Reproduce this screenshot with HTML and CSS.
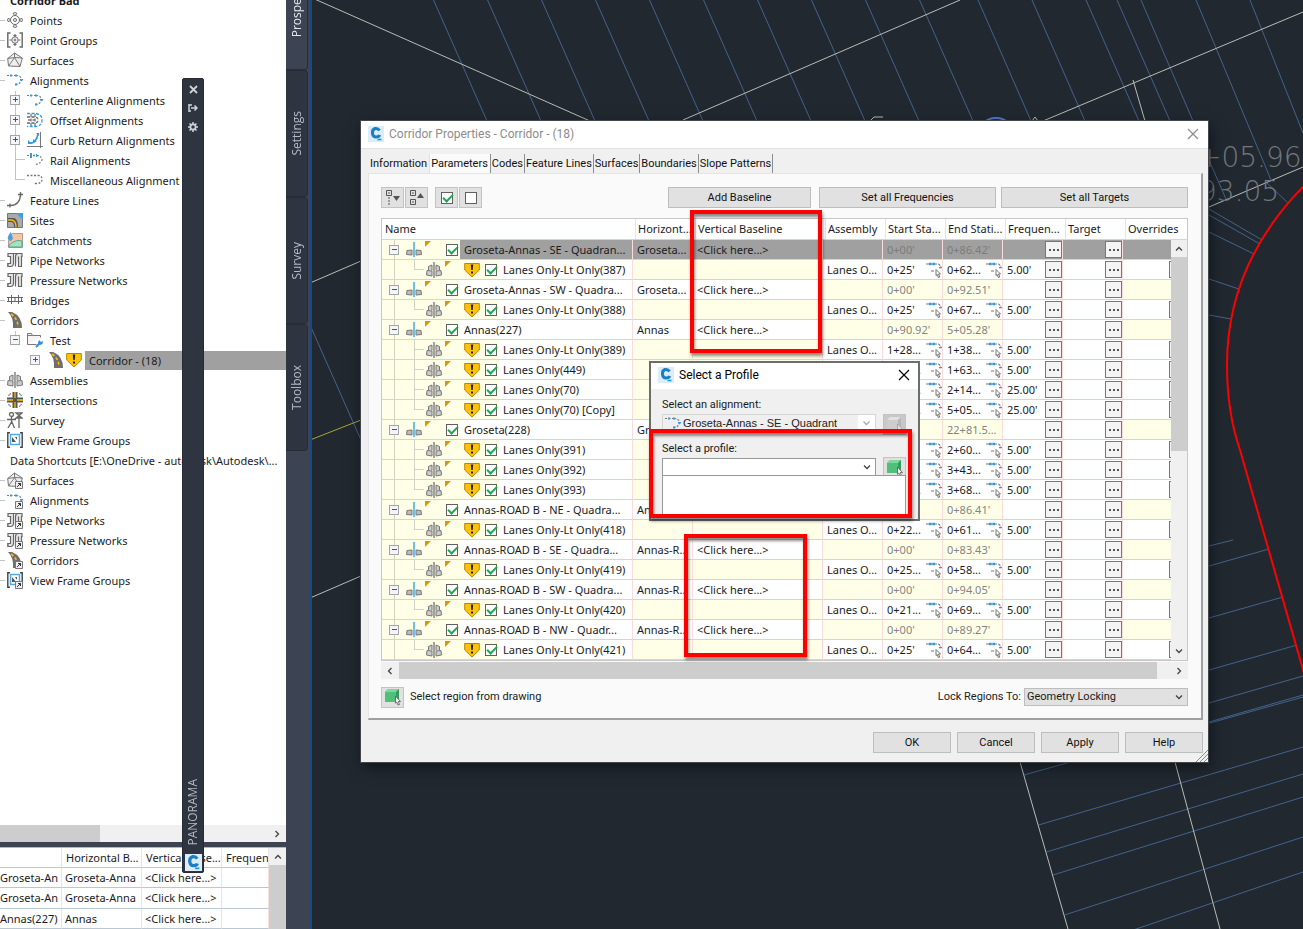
FILE: index.html
```html
<!DOCTYPE html>
<html lang="en">
<head>
<meta charset="utf-8">
<title>Corridor Properties</title>
<link rel="stylesheet" href="styles.css">
</head>
<body>
<svg class="defs" aria-hidden="true">
  <defs>
    <symbol id="i-points" viewBox="0 0 16 16"><g fill="none" stroke="#666"><circle cx="8" cy="8" r="4.500"/><circle cx="8" cy="8" r="1.500"/><path d="M8 3.500L6 1.500 8 .5 10 1.500zM8 12.500l-2 2 2 1 2-1zM3.500 8l-2-2-1 2 1 2zM12.500 8l2-2 1 2-1 2z"/></g></symbol>
    <symbol id="i-pgroups" viewBox="0 0 16 16"><g fill="none" stroke="#666"><path d="M3.500 1H.8v14h2.700M12.500 1h2.700v14h-2.700" stroke-width="1.400"/><circle cx="8" cy="8" r="3.200"/><circle cx="8" cy="8" r="1"/><path d="M8 2v3M8 11v3M2.500 8h2M11.500 8h2M6.500 3.500h3M6.500 12.500h3"/></g></symbol>
    <symbol id="i-surface" viewBox="0 0 16 16"><path d="M7.500 1L.7 6.500 1.500 14l11.500.5L15.300 6zM.7 6.500L7.500 5.500 15.300 6M7.500 1v4.500L1.500 14M7.500 5.500L13 14.500" fill="#eee" stroke="#777"/></symbol>
    <symbol id="i-align" viewBox="0 0 16 16"><path d="M0 3.500h9M9 3.500q5 0 5.500 4q-.5 5-7 5" fill="none" stroke="#777" stroke-width="1.200" stroke-dasharray="2 1.500"/><path d="M3 2.500h2v2H3zM8 2.500h2v2H8zM13 7h3v1.500h-3zM8 11.500h2v2H8z" fill="#2d9be8"/></symbol>
    <symbol id="i-offset" viewBox="0 0 16 16"><g fill="none" stroke-width="1.300" stroke-dasharray="3 1.500"><path d="M0 1.500h9q6 1 6 6.500t-6 6.500H0" stroke="#2d9be8"/><path d="M0 5h8q3 0 3 3t-3 3H0" stroke="#666"/><path d="M1 8h8M4 2v12M8 2v12" stroke="#777"/></g></symbol>
    <symbol id="i-curb" viewBox="0 0 16 16"><path d="M0 14.500h16M13.500 0v16" stroke="#777" fill="none"/><path d="M2 11q7 1 9-9" stroke="#2d9be8" fill="none" stroke-width="1.600"/><path d="M1 8l4 4H1zM9 1h3v3zM6 7l4 3H6z" fill="#2d9be8"/></symbol>
    <symbol id="i-rail" viewBox="0 0 16 16"><path d="M6 3.500h4q5 1 5 4t-6 5" fill="none" stroke="#777" stroke-width="1.300" stroke-dasharray="2 1.500"/><path d="M0 3.500h2" stroke="#777"/><path d="M3 1h2v5H3zM9 2h1v3H9z" fill="#2d9be8"/></symbol>
    <symbol id="i-misc" viewBox="0 0 16 16"><path d="M0 3.500h11q4 0 4 4t-6 4H7" fill="none" stroke="#777" stroke-width="1.300" stroke-dasharray="2 1.500"/></symbol>
    <symbol id="i-feature" viewBox="0 0 16 16"><path d="M3 13.500q10 0 10.500-11M0 13.500h5M3 11.500v4M11 2.500h5M13.500 0v5" fill="none" stroke="#666" stroke-width="1.300"/></symbol>
    <symbol id="i-sites" viewBox="0 0 16 16"><path d="M.5 1.500h15v14H.5z" fill="#aaa" stroke="#777"/><path d="M9 1h7v7z" fill="#3f9fe0"/><path d="M1 6h5q5 0 5 9H7q0-5-3-5H1z" fill="#555"/><path d="M1 8h4q4 1 4 7" stroke="#fb0" fill="none" stroke-width="1.400"/></symbol>
    <symbol id="i-catch" viewBox="0 0 16 16"><path d="M5 1.500h10.500v14H1.500V9z" fill="#f6c6a4" stroke="#b98"/><path d="M2 13q7-6 13-4v6H2z" fill="#a5e3bc" stroke="#4a9"/><path d="M3.500 0Q-2 8 3.500 9 8 8 3.500 0z" fill="#4a9fd8"/></symbol>
    <symbol id="i-pipe" viewBox="0 0 16 16"><path d="M1 1.500h5.500v9.500q0 3.500-3 3.500H1v-3h2.500v-7H1zM8.500 14.500v-10q0-3 3-3H15v3h-.5v10h-3v-10" fill="#e6e6e6" stroke="#666" stroke-width="1.200"/><path d="M6.500 1.500h4M0 11v4" stroke="#666" stroke-width="1.200"/></symbol>
    <symbol id="i-bridge" viewBox="0 0 16 16"><path d="M0 5.500h16M0 9.500h16M4.500 3v9M11.500 3v9M8 5v5M1.500 5v5M14.500 5v5" fill="none" stroke="#666"/></symbol>
    <symbol id="i-road" viewBox="0 0 16 16"><path d="M1 0h4q10 4 10 16H6Q7 6 1 0z" fill="#6e6e6e"/><path d="M4 2q7 5 7 13" stroke="#fb1" stroke-width="1.600" fill="none" stroke-dasharray="3 2"/></symbol>
    <symbol id="i-folder" viewBox="0 0 16 16"><path d="M.5 12.500v-11h4l1 2h8v2M.5 12.500h9M.5 3.500h5" fill="#f4f4f4" stroke="#777"/><path d="M9 15l4-4" stroke="#2d8fe0" stroke-width="2"/><path d="M12 8l2 2 2-1-.5 3-2.500 1-2-2z" fill="#2d8fe0"/></symbol>
    <symbol id="i-warn" viewBox="0 0 16 16"><path d="M.7 1.500h14.600V8L8 15 .7 8z" fill="#ffc20a" stroke="#b98500"/><path d="M6.800 2.500h2.400L8.700 8H7.300zM7 9.500h2v2H7z" fill="#222"/></symbol>
    <symbol id="i-assembly" viewBox="0 0 16 16"><path d="M1 8.500l5 .5v5l-5.500-1zM15 8.500l-5 .5v5l5.500-1zM2.500 8V4.500L6 3v5.500M13.500 8V4.500L10 3v5.500" fill="#ccc" stroke="#777"/><path d="M8 0v16" stroke="#666" stroke-width="1.200"/></symbol>
    <symbol id="i-inter" viewBox="0 0 16 16"><path d="M5.500 0h5v5.500H16v5h-5.500V16h-5v-5.500H0v-5h5.500z" fill="#555"/><path d="M8 0v6M8 10v6M0 8h6M10 8h6" stroke="#fb1" stroke-width="1.300"/><path d="M1 3.500q2.500 0 2.500-2.500M15 3.500q-2.500 0-2.500-2.500M1 12.500q2.500 0 2.500 2.500M15 12.500q-2.500 0-2.500 2.500" fill="none" stroke="#777"/></symbol>
    <symbol id="i-survey" viewBox="0 0 16 16"><g fill="none" stroke="#666" stroke-width="1.300"><circle cx="4.500" cy="2.500" r="2"/><path d="M4.500 5v5L1 16M4.500 9l3 7M0 7.500h9M12 5v11M9 1h6l-3 2.500L15 6H9l3-2.500z"/></g></symbol>
    <symbol id="i-frame" viewBox="0 0 16 16"><path d="M3 .8H.8v14.400H3M13 .8h2.200v14.400H13" fill="none" stroke="#444" stroke-width="1.400"/><path d="M3.500 2.500h9v10h-9z" fill="#fff" stroke="#55a9e8" stroke-width="1.500"/><path d="M5 5v5h4zM8 5h2v3z" fill="#555"/></symbol>
    <symbol id="i-link" viewBox="0 0 8 8"><path d="M.5.5h7v7h-7z" fill="#eee" stroke="#777"/><path d="M2 6l3.500-3.500M3 2.500h2.500V5" fill="none" stroke="#333"/></symbol>
    <symbol id="i-baseline" viewBox="0 0 16 16"><path d="M1 8.500l5-.5v5l-5.500-.5zM15 8.500L10 8v5l5.500-.5z" fill="#bbb" stroke="#777"/><path d="M8 0v15" stroke="#6cbdf0" stroke-width="2"/></symbol>
    <symbol id="i-flag" viewBox="0 0 6 6"><path d="M0 0h6L0 6z" fill="#e09500"/></symbol>
    <symbol id="i-pick" viewBox="0 0 16 16"><path d="M0 2h12q2 0 3 4M5 9h4" fill="none" stroke="#777" stroke-width="1.200" stroke-dasharray="3 1"/><path d="M3 .8h2.500v2.400H3zM6.500.8H9v2.400H6.500zM13 5h3v1.300h-3z" fill="#2d9be8"/><path d="M10 7.500l4.500 4.500h-2l1.300 3-1.500.5-1-3L10 13.500z" fill="#fff" stroke="#666" stroke-width=".9"/></symbol>
    <symbol id="i-cube" viewBox="0 0 18 18"><path d="M1 4l3-3h11v10l-3 3H1z" fill="#4fbf79"/><path d="M1 4l3-3h11l-3 3z" fill="#7fd79d"/><path d="M12 4l3-3v10l-3 3z" fill="#2f9d5b"/><path d="M11.500 8l5 5.500h-2.300l1.300 3-1.500.5-1.200-3-1.300 1.200z" fill="#fff" stroke="#555" stroke-width=".8"/></symbol>
    <symbol id="i-logo" viewBox="0 0 16 16"><path d="M0 0h16v16H0z" fill="#dcecf8"/><path d="M11.500 4.500Q10 2 7 2.500 4 3.500 4.500 7.500 5 11 8 11q3 0 3.700-2" fill="none" stroke="#1b7fc0" stroke-width="3"/><path d="M9.500 13.500h4" stroke="#1b9ad0" stroke-width="1.600"/></symbol>
    <symbol id="i-x" viewBox="0 0 12 12"><path d="M1 1l10 10M11 1L1 11" fill="none" stroke="currentColor" stroke-width="1.200"/></symbol>
    <symbol id="i-down" viewBox="0 0 10 10"><path d="M2 3.500L5 6.500 8 3.500" fill="none" stroke="currentColor" stroke-width="1.300"/></symbol>
  </defs>
</svg>

<main class="app">
  <svg class="drawing" aria-hidden="true">
    <g id="hatch" class="hatch"></g>
    <g class="edge">
      <path d="M310 283L361 261M683 120L960 0M1043 121L1303 12M1209 207L1303 167M310 598L361 576M310 -3L590 121M1133 80L1145 121M1020 762L1068 929M1175 762L1220 929M1032 121l3-4 3 4M870 121l4-4h9"/>
    </g>
    <path class="yellow" d="M310 440L361 420"/>
    <circle class="node" cx="996" cy="137" r="19"/>
    <path class="red" d="M1310 180Q1227 260 1227 365Q1227 412 1240 450Q1266 540 1306 680"/>
    <g class="station"><text x="1198" y="167">+05.96</text><text x="1199" y="201">93.05</text></g>
  </svg>

  <section class="palette" aria-label="Toolspace">
    <ul id="tree" class="tree"></ul>
    <div class="hscroll"><span class="hthumb"></span><svg class="chev right"><use href="#i-down"/></svg></div>
    <div class="mini">
      <table class="minitable">
        <thead><tr><th></th><th>Horizontal B...</th><th>Vertical Base...</th><th>Frequen</th></tr></thead>
        <tbody>
          <tr><td>Groseta-An</td><td>Groseta-Anna</td><td>&lt;Click here...&gt;</td><td></td></tr>
          <tr><td>Groseta-An</td><td>Groseta-Anna</td><td>&lt;Click here...&gt;</td><td></td></tr>
          <tr><td>Annas(227)</td><td>Annas</td><td>&lt;Click here...&gt;</td><td></td></tr>
        </tbody>
      </table>
      <div class="minibar"><svg class="chev up"><use href="#i-down"/></svg><span class="minithumb"></span></div>
    </div>
  </section>

  <nav class="sidetabs" aria-label="Toolspace tabs">
    <button class="sidetab on"><span>Prospector</span></button>
    <button class="sidetab"><span>Settings</span></button>
    <button class="sidetab"><span>Survey</span></button>
    <button class="sidetab"><span>Toolbox</span></button>
  </nav>

  <aside class="panorama" aria-label="Panorama">
    <button aria-label="Close"><svg width="9" height="9" viewBox="0 0 9 9"><path d="M1 1l7 7M8 1L1 8" stroke="currentColor" stroke-width="1.800"/></svg></button>
    <button aria-label="Auto-hide"><svg width="10" height="10" viewBox="0 0 10 10"><path d="M1 1v8M1 2h3M1 8h2M3 5h6M6.500 2.500L9 5 6.500 7.500" fill="none" stroke="currentColor" stroke-width="1.500"/></svg></button>
    <button aria-label="Properties"><svg width="10" height="10" viewBox="0 0 10 10"><circle cx="5" cy="5" r="2.600" fill="none" stroke="currentColor" stroke-width="1.700"/><path d="M5 0v2M5 8v2M0 5h2M8 5h2M1.500 1.500l1.300 1.300M7.200 7.200l1.300 1.300M8.500 1.500L7.200 2.800M2.800 7.200L1.500 8.500" stroke="currentColor" stroke-width="1.500"/></svg></button>
    <span class="panotitle">PANORAMA</span>
    <svg class="panologo" width="17" height="17"><use href="#i-logo"/></svg>
  </aside>

  <section class="dialog" role="dialog" aria-labelledby="dlg-title">
    <header class="titlebar">
      <svg width="16" height="16"><use href="#i-logo"/></svg>
      <h1 id="dlg-title">Corridor Properties - Corridor - (18)</h1>
      <button class="close" aria-label="Close"><svg width="12" height="12"><use href="#i-x"/></svg></button>
    </header>
    <nav class="tabs">
      <button>Information</button><button class="on">Parameters</button><button>Codes</button><button>Feature Lines</button><button>Surfaces</button><button>Boundaries</button><button>Slope Patterns</button>
    </nav>
    <div class="panel">
      <div class="toolbar">
        <button class="tool" aria-label="Expand all"><svg width="18" height="18" viewBox="0 0 18 18"><path d="M2.500 1.500h5v5h-5zM4 4h2" fill="none" stroke="#555"/><path d="M5 8v8" stroke="#555" stroke-dasharray="2 1"/><path d="M9 7h7l-3.500 5z" fill="#555"/></svg></button>
        <button class="tool" aria-label="Collapse all"><svg width="18" height="18" viewBox="0 0 18 18"><path d="M2.500 1.500h5v5h-5zM2.500 10.500h5v5h-5zM4 4h2M4 13h2" fill="none" stroke="#555"/><path d="M9 9h7l-3.500-5z" fill="#555"/></svg></button>
        <button class="tool gap" aria-label="Select all"><span class="box ticked"></span></button>
        <button class="tool" aria-label="Select none"><span class="box"></span></button>
        <span class="grow"></span>
        <button class="btn add">Add Baseline</button>
        <button class="btn freq">Set all Frequencies</button>
        <button class="btn targ">Set all Targets</button>
      </div>
      <div class="gridbox">
        <table class="grid">
          <colgroup><col class="c-name"><col class="c-n"><col class="c-vert"><col class="c-n"><col class="c-n"><col class="c-n"><col class="c-n"><col class="c-n"><col></colgroup>
          <thead><tr><th>Name</th><th>Horizont...</th><th>Vertical Baseline</th><th>Assembly</th><th>Start Sta...</th><th>End Stati...</th><th>Frequen...</th><th>Target</th><th>Overrides</th></tr></thead>
          <tbody id="rows"></tbody>
        </table>
        <div class="vbar"><svg class="chev up"><use href="#i-down"/></svg><span class="vthumb"></span><svg class="chev"><use href="#i-down"/></svg></div>
      </div>
      <div class="hbar"><svg class="chev left"><use href="#i-down"/></svg><span class="hbarthumb"></span><svg class="chev right"><use href="#i-down"/></svg></div>
      <div class="under">
        <button class="tool pick" id="pickregion" aria-labelledby="picklabel"><svg width="18" height="18"><use href="#i-cube"/></svg></button>
        <span id="picklabel">Select region from drawing</span>
        <label class="lock" for="lock">Lock Regions To:</label>
        <div class="combo gray"><select id="lock"><option>Geometry Locking</option></select><svg class="chev"><use href="#i-down"/></svg></div>
      </div>
    </div>
    <footer class="actions">
      <button class="btn">OK</button><button class="btn">Cancel</button><button class="btn">Apply</button><button class="btn">Help</button>
    </footer>
    <svg class="grip" width="14" height="14" viewBox="0 0 14 14"><path d="M2 14L14 2M6 14l8-8M10 14l4-4" stroke="#8a8a8a"/></svg>
  </section>

  <section class="profile" role="dialog" aria-labelledby="prof-title">
    <header class="titlebar">
      <svg width="16" height="16"><use href="#i-logo"/></svg>
      <h2 id="prof-title">Select a Profile</h2>
      <button class="close" aria-label="Close"><svg width="12" height="12"><use href="#i-x"/></svg></button>
    </header>
    <div class="profbody">
      <label for="alignment">Select an alignment:</label>
      <div class="pickrow">
        <div class="combo off"><svg width="16" height="16"><use href="#i-align"/></svg><select id="alignment" disabled><option>Groseta-Annas - SE - Quadrant</option></select><svg class="chev"><use href="#i-down"/></svg></div>
        <button class="tool off" aria-label="Pick alignment" disabled><svg width="18" height="18"><use href="#i-cube"/></svg></button>
      </div>
      <label for="profilesel">Select a profile:</label>
      <div class="pickrow second">
        <div class="combo open"><select id="profilesel"><option></option></select><svg class="chev"><use href="#i-down"/></svg></div>
        <button class="tool" aria-label="Pick profile"><svg width="18" height="18"><use href="#i-cube"/></svg></button>
      </div>
      <div class="droplist"></div>
    </div>
  </section>

  <div class="mark mark-a"></div>
  <div class="mark mark-b"></div>
  <div class="mark mark-c"></div>
</main>
<script src="app.js"></script>
</body>
</html>
```

FILE: styles.css
```css
* { box-sizing: border-box; }
body { margin: 0; background: #212830; color: #1b1b1b; font: 12px/20px "Open Sans", "Noto Sans", sans-serif; }
button, select, input { font: inherit; color: inherit; margin: 0; padding: 0; }
button { border: 0; background: none; }
h1, h2 { margin: 0; font-size: 12px; font-weight: 400; }
svg { display: block; flex: none; }
.defs { position: absolute; width: 0; height: 0; }
.grow { flex: 1; }

.app { position: relative; display: flex; height: 100vh; overflow: hidden; }
.drawing { position: absolute; inset: 0; width: 100%; height: 100%; }
.hatch { stroke: #43648c; fill: none; }
.edge { stroke: #b9bdb5; fill: none; }
.yellow { stroke: #a9a53a; fill: none; }
.node { stroke: #5575c9; fill: none; stroke-width: 2; }
.red { stroke: #f00; fill: none; stroke-width: 2; }
.station { fill: #73787e; font: 200 28px "DejaVu Sans Light", "DejaVu Sans", sans-serif; }

/* Toolspace */
.palette { position: relative; display: flex; flex-direction: column; width: 286px; background: #3c4453; font: 11px/20px "Noto Sans", "Open Sans", sans-serif; }
.tree { flex: 1; margin: 0; padding: 0; list-style: none; overflow: hidden; background: #fff; min-height: 0; }
.tree li { display: flex; align-items: center; height: 20px; white-space: nowrap; padding-left: 7px; }
.tree li:first-child { margin-top: -9px; padding-left: 10px; font-weight: 700; }
.tree .ico { position: relative; width: 16px; height: 16px; margin: -3px 7px 0 0; }
.tree .ico svg { width: 16px; height: 16px; }
.tree .ico .ln { position: absolute; right: 0; bottom: -1px; width: 8px; height: 8px; }
.tree .d1 { background: linear-gradient(#c4c4c4, #c4c4c4) 15px 0/1px 100% no-repeat; padding-left: 10px; }
.tree .d1.end { background-size: 1px 9px; }
.tree .d0::before { content: ""; width: 5px; margin: -2px 0 0 -7px; border-top: 1px solid #c4c4c4; }
.tree .d0 .ico { margin-left: 2px; }
.tree .dash { width: 10px; margin: -3px 0 0 5px; border-top: 1px solid #c4c4c4; }
.tree .d1 .ico { margin-left: 2px; }
.tree .d1 .expander ~ .ico { margin-left: 7px; }
.tree .d2 { padding-left: 30px; }
.tree .d2 .ico { margin: -3px 2px 0 0; }
.tree .d2 .expander { margin-right: 8px; }
.tree .sel { flex: 1; height: 19px; margin: -2px 0 0 1px; padding-left: 4px; background: #a0a0a0; line-height: 20px; }
.tree .cut { padding-left: 10px; }
.expander { width: 10px; height: 10px; border: 1px solid #a4a4a4; background: #f4f5fa; position: relative; flex: none; margin-top: -3px; }
.expander::before, .expander.plus::after { content: ""; position: absolute; left: 2px; right: 1px; top: 3px; height: 1px; background: #3a55a0; }
.expander.plus::after { left: 4px; right: auto; top: 1px; width: 1px; height: 5px; }
.chev { width: 10px; height: 10px; color: #444; }
.chev.up { transform: rotate(180deg); }
.chev.left { transform: rotate(90deg); }
.chev.right { transform: rotate(-90deg); }
.hscroll { display: flex; align-items: center; justify-content: space-between; height: 17px; background: #f0f0f0; padding-right: 4px; }
.hthumb { width: 100px; height: 17px; background: #cdcdcd; }
.mini { display: flex; margin-top: 5px; background: #fff; overflow: hidden; height: 82px; border-top: 1px solid #b4b8be; }
.minitable { flex: 1; width: 269px; table-layout: fixed; border-collapse: separate; border-spacing: 0; }
.minitable th, .minitable td { height: 20px; padding: 0 4px 0 3px; overflow: hidden; white-space: nowrap; text-align: left; font-weight: 400; line-height: 19px; border-bottom: 1px solid #b9c7d3; border-right: 1px solid #f6dede; }
.minitable th { padding-left: 4px; border-right-color: #e5e5e5; }
.minitable th:nth-child(1) { width: 62px; }
.minitable th:nth-child(2), .minitable th:nth-child(3) { width: 80px; padding-right: 0; }
.minitable th:nth-child(4) { padding-right: 0; }
.minitable td:first-child { padding: 0; }
.minibar { width: 17px; background: #f0f0f0; display: flex; flex-direction: column; align-items: center; padding-top: 4px; }
.minithumb { flex: 1; width: 17px; margin-top: 3px; background: #cdcdcd; }

.sidetabs { position: relative; width: 26px; background: #3c4453; border-right: 2px solid #174a82; padding-right: 2px; }
.sidetab { display: flex; align-items: center; justify-content: center; width: 22px; height: 127px; border: 1px solid #272d38; border-left: 0; border-radius: 0 4px 4px 0; background: #2e3440; color: #b6bac1; font-size: 12px; }
.sidetab:first-child { margin-top: -57px; }
.sidetab.on { background: #3c4453; color: #e4e6ea; }
.sidetab span, .panotitle { writing-mode: vertical-rl; transform: rotate(180deg); }

.panorama { position: absolute; left: 182px; top: 78px; bottom: 56px; width: 22px; display: flex; flex-direction: column; align-items: center; background: #2e3440; border: 1px solid #262b35; border-radius: 2px; color: #cfd2d6; padding: 0 0 1px; }
.panorama button { height: 19px; padding: 1px 0 0; }
.panotitle { margin-top: auto; margin-bottom: 8px; color: #b6bac1; }

/* Corridor Properties */
.dialog { position: absolute; left: 361px; top: 121px; width: 847px; display: flex; flex-direction: column; background: #f0f0f0; box-shadow: 0 0 0 1px #42474d, 2px 5px 14px rgba(0,0,0,.5); font: 11px/20px Roboto, "Noto Sans", sans-serif; }
.titlebar { display: flex; align-items: center; gap: 5px; height: 28px; padding: 0 9px 2px 7px; background: #fff; color: #8c8c8c; font-family: Roboto, "Noto Sans", sans-serif; }
.titlebar .close { margin-left: auto; }
.dialog > .titlebar { border-bottom: 1px solid #e2e2e2; }
.tabs { display: flex; padding: 5px 7px 0 8px; height: 24px; color: #111; }
.tabs button { padding: 0 1px; border-right: 1px solid #8c8c8c; line-height: 17px; height: 19px; }
.tabs button:first-child { border-right: 1px solid #e0e0e0; padding-right: 2px; }
.tabs .on { background: #fafafa; padding-right: 2px; }
.panel { margin: 0 5px 0 7px; padding: 13px 13px 10px 12px; background: #fafafa; border: solid #e4e4e4; border-width: 1px 1px 2px; border-right: 2px solid #a0a0a0; border-bottom-color: #a0a0a0; }
.toolbar { display: flex; }
.tool { display: flex; align-items: center; justify-content: center; width: 23px; height: 21px; margin-right: 1px; background: #e1e1e1; border: 1px solid #c3c3c3; }
.tool.gap { margin-left: 6px; }
.box, .check { flex: none; appearance: none; width: 12px; height: 12px; border: 1px solid #606060; background: #fff; position: relative; }
.ticked::after, .check:checked::after { content: ""; position: absolute; left: 1px; top: 1px; width: 8px; height: 4px; border: solid #22a552; border-width: 0 0 2px 2px; transform: rotate(-45deg); }
.btn { height: 21px; background: #e1e1e1; border: 1px solid #bdbdbd; line-height: 19px; color: #111; }
.add { width: 143px; }
.freq { width: 177px; margin-left: 8px; }
.targ { width: 187px; margin-left: 5px; }
.gridbox { position: relative; margin: 10px 0 1px; border: 1px solid #c8c8c8; background: #fff; overflow: hidden; }
.grid { width: 100%; table-layout: fixed; border-collapse: separate; border-spacing: 0; font-family: "Noto Sans", "Open Sans", sans-serif; }
.c-name { width: 251px; }
.c-n { width: 60px; }
.c-vert { width: 130px; }
.grid th, .grid td { height: 20px; padding: 0 0 0 4px; text-align: left; font-weight: 400; white-space: nowrap; overflow: hidden; line-height: 19px; border-bottom: 1px solid #cbd8e0; border-right: 1px solid #fbdcdc; }
.grid th { height: 21px; padding: 0 0 1px 5px; border-right: 0; background: linear-gradient(#e5e5e5, #e5e5e5) 2px 0/1px 100% no-repeat; }
.grid th:first-child { padding-left: 3px; background: none; }
.grid .dim { background: #ffffe8; color: #838383; }
.grid td:first-child { padding: 0; background: #ffffe8; }
.name { display: flex; align-items: center; height: 19px; }
.name .expander { margin: 0 7px 0 7px; }
.name .txt { flex: 1; align-self: stretch; background: #fff; padding-left: 4px; margin-left: 2px; overflow: hidden; }
.l0 .name { background: linear-gradient(#d2d2c4, #d2d2c4) 12px 0/1px 100% no-repeat; }
.l1 .name { padding-left: 44px; background: linear-gradient(#d2d2c4, #d2d2c4) 12px 0/1px 100% no-repeat, linear-gradient(#d2d2c4, #d2d2c4) 32px 0/1px 100% no-repeat, linear-gradient(#d2d2c4, #d2d2c4) 32px 9px/10px 1px no-repeat; }
.l1.last .name { background-size: 1px 100%, 1px 9px, 10px 1px; }
.name .flag { margin: 0 0 12px 3px; }
.l0 .check { margin-left: 15px; }
.l1 .warn { margin: 0 5px 0 13px; }
.selected td, .selected td.dim, .selected .txt { background: #a0a0a0; }
.selected td:first-child { background: #ffffe8; }
.selected .dim { color: #7c7c7c; }
.cell { display: flex; align-items: center; justify-content: space-between; height: 19px; }
.dots { width: 17px; height: 17px; margin: 0 0 0 auto; border: 1px solid #777; background: #f4f4f4; display: flex; align-items: center; justify-content: center; gap: 2px; }
.dots::before, .dots::after, .dots i { content: ""; width: 2px; height: 2px; background: #555; }
.vbar { position: absolute; right: 0; top: 21px; bottom: 0; width: 16px; background: #f0f0f0; display: flex; flex-direction: column; align-items: center; padding: 4px 0; }
.vthumb { width: 16px; height: 194px; margin: 3px 0 auto; background: #cdcdcd; }
.hbar { display: flex; align-items: center; justify-content: space-between; height: 17px; padding: 0 4px; background: #f0f0f0; }
.hbarthumb { flex: 1; height: 17px; margin: 0 17px 0 4px; background: #cdcdcd; }
.under { display: flex; align-items: center; margin-top: 7px; height: 22px; }
.pick { margin-right: 6px; }
.lock { margin-left: auto; margin-right: 3px; }
.combo { position: relative; display: flex; align-items: center; border: 1px solid #999; background: #fff; }
.combo select { appearance: none; border: 0; background: none; flex: 1; height: 16px; line-height: 16px; padding: 0 18px 0 2px; border-radius: 0; }
.combo > .chev { position: absolute; right: 3px; }
.combo.gray { width: 164px; height: 18px; background: #e1e1e1; border-color: #bdbdbd; }
.actions { display: flex; justify-content: flex-end; gap: 6px; padding: 12px 5px 9px; }
.actions .btn { width: 78px; }
.grip { position: absolute; right: 0; bottom: 0; }

/* Select a Profile */
.profile { position: absolute; left: 649px; top: 361px; width: 271px; height: 160px; overflow: hidden; background: #f0f0f0; border: 2px solid #6d6d6d; font: 11px/20px Roboto, "Noto Sans", sans-serif; }
.profile .titlebar { height: 26px; color: #000; padding: 0 8px 2px 7px; }
.profbody { padding: 7px 11px 0 11px; display: flex; flex-direction: column; }
.profbody label { line-height: 18px; }
.pickrow { display: flex; gap: 7px; height: 26px; }
.pickrow .combo { width: 215px; height: 18px; }
.combo.off { border-color: #d5d5d5; background: #efefef; padding-left: 2px; font: 11px "Liberation Sans", sans-serif; color: #222; }
.combo.off select { opacity: 1; color: #222; }
.combo.off > .chev { color: #aaa; background: #fff; width: 17px; right: 0; height: 16px; padding: 3px; }
.tool.off { background: #c8c8c8; }
.tool.off svg { filter: grayscale(1) brightness(1.3); opacity: .5; }
.pickrow.second { height: 17px; }
.second .tool { margin-top: -1px; }
.droplist { width: 244px; height: 42px; border: 1px solid #999; background: #fff; position: relative; }

/* Callout frames */
.mark { position: absolute; border: 4px solid #f00; box-shadow: 1px 3px 3px rgba(0,0,0,.45), inset 1px 3px 3px rgba(0,0,0,.45); pointer-events: none; }
.mark-a { left: 690px; top: 210px; width: 132px; height: 143px; }
.mark-b { left: 649px; top: 429px; width: 263px; height: 89px; }
.mark-c { left: 684px; top: 534px; width: 123px; height: 123px; }
```

FILE: app.js
```js
const use = (id, size, cls) =>
  `<svg class="${cls || ''}" width="${size}" height="${size}"><use href="#i-${id}"/></svg>`;
const plus = '<button class="expander plus" aria-label="Expand"></button>';
const minus = '<button class="expander" aria-label="Collapse"></button>';
const ico = (id, link) =>
  `<span class="ico">${use(id, 16)}${link ? '<svg class="ln"><use href="#i-link"/></svg>' : ''}</span>`;

const top0 = (id, text, link) => `<li class="d0">${ico(id, link)}${text}</li>`;
const sub = (id, text, box, end) =>
  `<li class="d1${end ? ' end' : ''}">${box || '<span class="dash"></span>'}${ico(id)}${text}</li>`;

document.getElementById('tree').innerHTML = [
  '<li>Corridor Bad</li>',
  top0('points', 'Points'), top0('pgroups', 'Point Groups'), top0('surface', 'Surfaces'), top0('align', 'Alignments'),
  sub('align', 'Centerline Alignments', plus), sub('offset', 'Offset Alignments', plus),
  sub('curb', 'Curb Return Alignments', plus), sub('rail', 'Rail Alignments'),
  sub('misc', 'Miscellaneous Alignment', '', true),
  top0('feature', 'Feature Lines'), top0('sites', 'Sites'), top0('catch', 'Catchments'),
  top0('pipe', 'Pipe Networks'), top0('pipe', 'Pressure Networks'), top0('bridge', 'Bridges'),
  top0('road', 'Corridors'), sub('folder', 'Test', minus, true),
  `<li class="d2">${plus}${ico('road')}${ico('warn')}<span class="sel">Corridor - (18)</span></li>`,
  top0('assembly', 'Assemblies'), top0('inter', 'Intersections'), top0('survey', 'Survey'),
  top0('frame', 'View Frame Groups'),
  '<li class="cut">Data Shortcuts [E:\\OneDrive - autodesk\\Autodesk\\...</li>',
  top0('surface', 'Surfaces', true), top0('align', 'Alignments', true), top0('pipe', 'Pipe Networks', true),
  top0('pipe', 'Pressure Networks', true), top0('road', 'Corridors', true), top0('frame', 'View Frame Groups', true)
].join('');

// Baseline: name, horizontal, start, end, regions. Region: name, start, end, frequency.
const baselines = [
  ['Groseta-Annas - SE - Quadran...', 'Groseta...', "0+00'", "0+86.42'", [['Lanes Only-Lt Only(387)', "0+25'", '0+62...', "5.00'"]]],
  ['Groseta-Annas - SW - Quadra...', 'Groseta...', "0+00'", "0+92.51'", [['Lanes Only-Lt Only(388)', "0+25'", '0+67...', "5.00'"]]],
  ['Annas(227)', 'Annas', "0+90.92'", "5+05.28'", [
    ['Lanes Only-Lt Only(389)', '1+28...', '1+38...', "5.00'"], ['Lanes Only(449)', '1+38...', '1+63...', "5.00'"],
    ['Lanes Only(70)', '1+63...', '2+14...', "25.00'"], ['Lanes Only(70) [Copy]', '2+14...', '5+05...', "25.00'"]]],
  ['Groseta(228)', 'Groseta', "0+00'", '22+81.5...', [
    ['Lanes Only(391)', "0+00'", '2+60...', "5.00'"], ['Lanes Only(392)', '2+60...', '3+43...', "5.00'"],
    ['Lanes Only(393)', '3+43...', '3+68...', "5.00'"]]],
  ['Annas-ROAD B - NE - Quadra...', 'Annas-R...', "0+00'", "0+86.41'", [['Lanes Only-Lt Only(418)', '0+22...', '0+61...', "5.00'"]]],
  ['Annas-ROAD B - SE - Quadra...', 'Annas-R...', "0+00'", "0+83.43'", [['Lanes Only-Lt Only(419)', '0+25...', '0+58...', "5.00'"]]],
  ['Annas-ROAD B - SW - Quadra...', 'Annas-R...', "0+00'", "0+94.05'", [['Lanes Only-Lt Only(420)', '0+21...', '0+69...', "5.00'"]]],
  ['Annas-ROAD B - NW - Quadr...', 'Annas-R...', "0+00'", "0+89.27'", [['Lanes Only-Lt Only(421)', "0+25'", '0+64...', "5.00'"]]]
];
const dots = '<button class="dots" aria-label="Edit"><i></i></button>';
const check = n => `<input class="check" type="checkbox" checked aria-label="${n}">`;
const cell = (text, extra) => `<td><div class="cell">${text}${extra}</div></td>`;
const pick = use('pick', 16);

document.getElementById('rows').innerHTML = baselines.map(([name, hor, start, end, regions], b) =>
  `<tr class="l0${b ? '' : ' selected'}"><td><div class="name">${minus}${use('baseline', 16)}${use('flag', 6, 'flag')}${check(name)}<span class="txt">${name}</span></div></td>
  <td>${hor}</td><td>&lt;Click here...&gt;</td><td class="dim"></td><td class="dim">${start}</td><td class="dim">${end}</td>${cell('', dots)}${cell('', dots)}<td class="dim"></td></tr>` +
  regions.map(([rname, rstart, rend, freq], r) =>
    `<tr class="l1${r === regions.length - 1 ? ' last' : ''}"><td><div class="name">${use('assembly', 16)}${use('flag', 6, 'flag')}${use('warn', 16, 'warn')}${check(rname)}<span class="txt">${rname}</span></div></td>
    <td class="dim"></td><td class="dim"></td><td>Lanes O...</td>${cell(rstart, pick)}${cell(rend, pick)}${cell(freq, dots)}${cell('', dots)}${cell('', dots)}</tr>`
  ).join('')
).join('');

// Survey hatching behind the windows.
const lines = [];
for (let x = 301; x < 800; x += 54) lines.push(`M${x} -300L${x + 186} 121`);
[[978, 0, 1031, 121], [1032, 0, 1085, 121], [1086, 0, 1139, 121], [1117, 0, 1170, 121], [1141, 0, 1193, 121],
 [1196, 0, 1271, 180], [1250, 0, 1303, 133], [1209, 160, 1226, 199], [1266, 182, 1288, 203],
 [1209, 209, 1262, 240], [1209, 215, 1260, 244], [1209, 232, 1254, 254], [1209, 279, 1239, 289], [1209, 315, 1231, 319],
 [1209, 546, 1233, 540], [1209, 566, 1269, 549], [1209, 618, 1283, 597], [1209, 670, 1297, 645], [1209, 703, 1303, 676],
 [1209, 722, 1303, 695], [310, 325, 361, 440]].forEach(([a, b, c, d]) => lines.push(`M${a} ${b}L${c} ${d}`));
[775, 825, 852, 875, 915, 950].forEach(y => lines.push(`M${1024 + (y - 775) * 0.29} ${y}L1303 ${y - 78}`));
document.getElementById('hatch').innerHTML = `<path d="${lines.join('')}"/>`;
```
